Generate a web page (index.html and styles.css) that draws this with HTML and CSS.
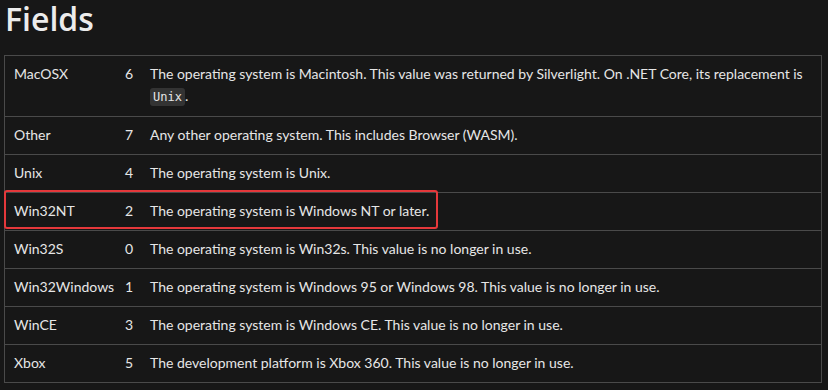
FILE: index.html
```html
<!DOCTYPE html>
<html>
<head>
    <title>Fields</title>
    <meta name="viewport" content="width=device-width, initial-scale=1.0">
    <link rel="stylesheet" href="styles.css">
</head>
<body>
    <h2 class="title">Fields</h2>

    <div class="table-wrap">
        <table class="fields">
            <tr>
                <td class="name">MacOSX</td>
                <td class="value">6</td>
                <td class="desc">The operating system is Macintosh. This value was returned by Silverlight. On .NET Core, its replacement is <code>Unix</code>.</td>
            </tr>
            <tr>
                <td class="name">Other</td>
                <td class="value">7</td>
                <td class="desc">Any other operating system. This includes Browser (WASM).</td>
            </tr>
            <tr>
                <td class="name">Unix</td>
                <td class="value">4</td>
                <td class="desc">The operating system is Unix.</td>
            </tr>
            <tr>
                <td class="name">Win32NT</td>
                <td class="value">2</td>
                <td class="desc">The operating system is Windows NT or later.</td>
            </tr>
            <tr>
                <td class="name">Win32S</td>
                <td class="value">0</td>
                <td class="desc">The operating system is Win32s. This value is no longer in use.</td>
            </tr>
            <tr>
                <td class="name">Win32Windows</td>
                <td class="value">1</td>
                <td class="desc">The operating system is Windows 95 or Windows 98. This value is no longer in use.</td>
            </tr>
            <tr>
                <td class="name">WinCE</td>
                <td class="value">3</td>
                <td class="desc">The operating system is Windows CE. This value is no longer in use.</td>
            </tr>
            <tr>
                <td class="name">Xbox</td>
                <td class="value">5</td>
                <td class="desc">The development platform is Xbox 360. This value is no longer in use.</td>
            </tr>
        </table>

        <!-- 标注框 -->
        <div class="highlight"></div>
    </div>
</body>
</html>
```

FILE: styles.css
```css
/* 基础样式 */
body {
    font-family: "Lato", "Open Sans", sans-serif;
    margin: 0;
    padding: 0 6px 0 4px;
    background-color: #171717;
    color: #e6e6e6;
}

.title {
    font-family: "Open Sans", sans-serif;
    font-size: 32px;
    font-weight: 600;
    line-height: 38px;
    margin: 0 0 17px 1px;
    color: #ececec;
}

.table-wrap {
    position: relative;
}

.fields {
    width: 100%;
    table-layout: fixed;
    border-collapse: collapse;
    border: 1px solid #4a4a4a;
    font-size: 14px;
    line-height: 22px;
}

.fields td {
    border-top: 1px solid #4a4a4a;
    border-bottom: 1px solid #4a4a4a;
    padding: 7px 8px 8px;
    vertical-align: top;
    white-space: normal;
}

.fields .name {
    width: 95px;
    padding-left: 9px;
    white-space: nowrap;
}

.fields .value {
    width: 8px;
    padding-right: 9px;
    text-align: right;
}

.fields code {
    font-family: "DejaVu Sans Mono", "Liberation Mono", monospace;
    font-size: 12px;
    background: #333333;
    color: #e6e6e6;
    padding: 2px 3px;
    border-radius: 3px;
}

/* 红色标注 */
.highlight {
    position: absolute;
    left: 0;
    top: 135px;
    width: 434px;
    height: 39px;
    border: 2px solid #e5383b;
    border-radius: 3px;
    box-sizing: border-box;
}
```
